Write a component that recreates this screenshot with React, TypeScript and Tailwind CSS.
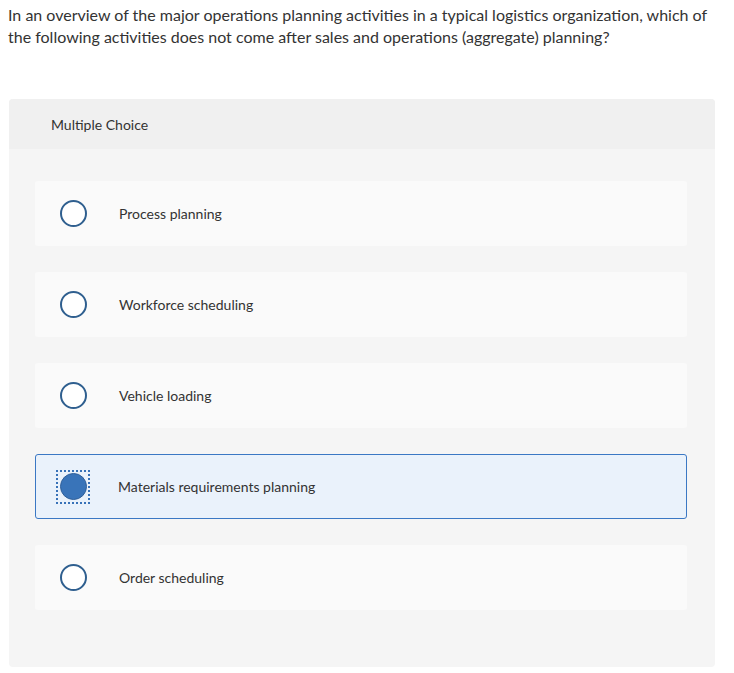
import React from 'react';

const options = [
  'Process planning',
  'Workforce scheduling',
  'Vehicle loading',
  'Materials requirements planning',
  'Order scheduling',
];

const selected = 3;

export default function App() {
  return (
    <div className="min-h-[673px] bg-white text-[#333] font-['Lato',sans-serif]">
      <p className="pl-2 pr-[20px] pt-[4px] text-[16px] leading-[22px] text-[#333]">
        In an overview of the major operations planning activities in a typical logistics organization, which of the
        following activities does not come after sales and operations (aggregate) planning?
      </p>

      <div className="mt-[51px] ml-[9px] w-[706px] rounded-sm bg-[#f5f5f5] pb-[57px]">
        <div className="flex h-[50px] items-center rounded-t-sm bg-[#f0f0f0] pl-[42px] text-[14px] text-[#333]">
          Multiple Choice
        </div>
        <div className="flex flex-col gap-[26px] pl-[26px] pr-[28px] pt-[32px]">
          {options.map((label, i) => {
            const isSel = i === selected;
            return (
              <div
                key={label}
                className={
                  isSel
                    ? 'flex h-[65px] items-center rounded-[3px] border border-[#3b78c4] bg-[#eaf2fb] pl-[24px]'
                    : 'flex h-[65px] items-center rounded-[3px] border border-transparent bg-[#fafafa] pl-[24px]'
                }
              >
                {isSel ? (
                  <span className="flex h-[34px] w-[34px] items-center justify-center border-2 border-dotted border-[#3872b8] -ml-[4px] -mr-[4px]">
                    <span className="h-[27px] w-[27px] rounded-full border border-[#2f5f99] bg-[#3974b9]" />
                  </span>
                ) : (
                  <span className="h-[27px] w-[27px] rounded-full border-2 border-[#2f5f8f] bg-white" />
                )}
                <span className="ml-[32px] text-[14px] text-[#333]">{label}</span>
              </div>
            );
          })}
        </div>
      </div>
    </div>
  );
}
